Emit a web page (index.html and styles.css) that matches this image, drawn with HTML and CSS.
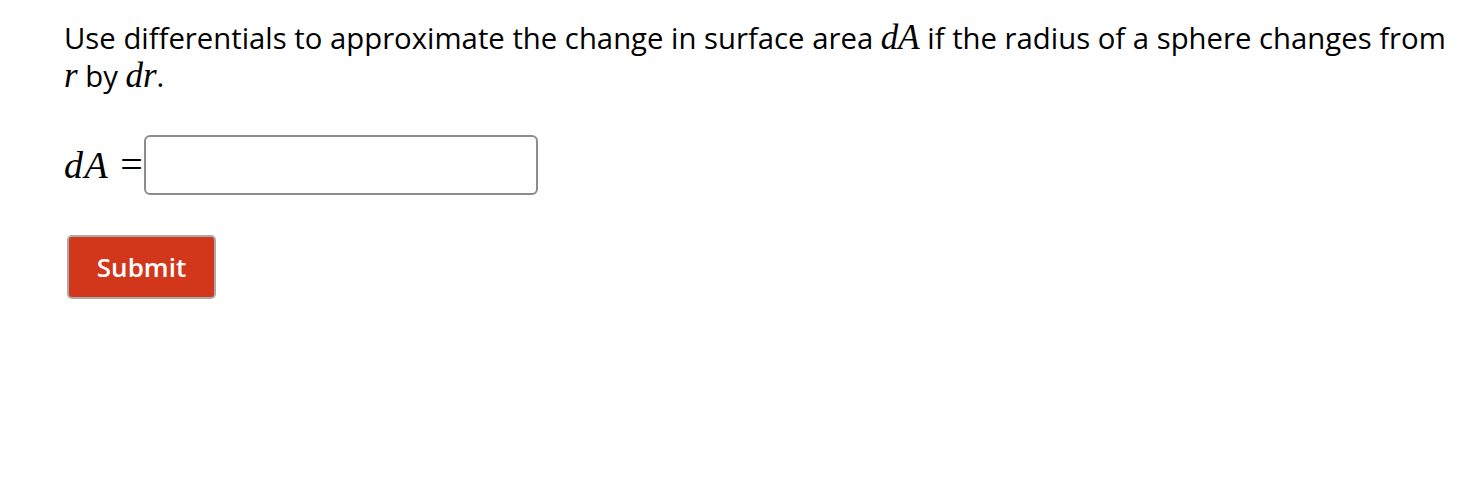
FILE: index.html
```html
<!DOCTYPE html>
<html>
<head>
<meta charset="utf-8">
<link rel="stylesheet" href="styles.css">
</head>
<body>
<div class="page">
  <p class="question">Use differentials to approximate the change in surface area <span class="m">dA</span> if the radius of a sphere changes from <span class="m">r</span> by <span class="m">dr</span>.</p>
  <div class="answer-row">
    <span class="m lhs">dA</span><span class="eq">=</span><input class="answer" type="text">
  </div>
  <button class="submit">Submit</button>
</div>
</body>
</html>
```
FILE: styles.css
```css
body {
  margin: 0;
  background: #fff;
}
.page {
  padding: 19px 8px 0 64px;
  font-family: "Open Sans", sans-serif;
  color: #000;
}
.question {
  margin: 0;
  font-size: 29.3px;
  line-height: 38px;
}
.m {
  font-family: "Liberation Serif", serif;
  font-style: italic;
  font-size: 35px;
  line-height: 1;
}
.answer-row {
  display: flex;
  align-items: center;
  margin-top: 40px;
}
.lhs {
  font-size: 38px;
  letter-spacing: 1.5px;
}
.eq {
  font-family: "Liberation Serif", serif;
  font-size: 40px;
  line-height: 1;
  margin: 0 1px 0 11px;
}
.answer {
  width: 390px;
  height: 56px;
  border: 2px solid #8c8c8c;
  border-radius: 6px;
  box-sizing: content-box;
  padding: 0;
  margin: 0;
}
.submit {
  display: block;
  margin: 40px 0 0 3px;
  width: 149px;
  height: 64px;
  background: #d2371c;
  color: #fff;
  border: 2px solid #ababab;
  border-radius: 5px;
  font-family: "Open Sans", sans-serif;
  font-size: 26px;
  font-weight: 600;
  padding: 0;
}
```
